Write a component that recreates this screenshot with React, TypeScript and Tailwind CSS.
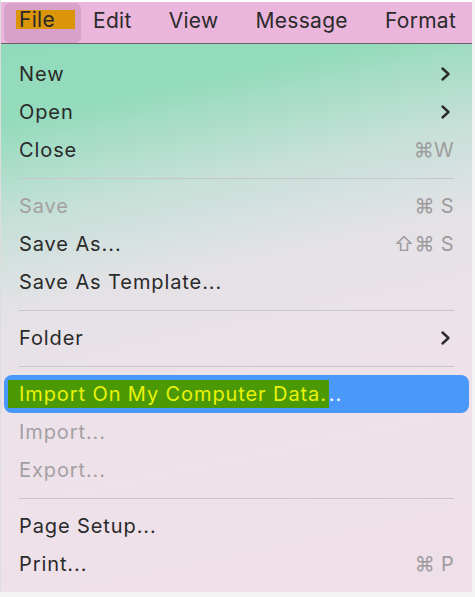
import type { ReactNode } from 'react'

type Item =
  | { kind: 'sep' }
  | {
      kind: 'item'
      label: ReactNode
      shortcut?: ReactNode
      submenu?: boolean
      disabled?: boolean
      active?: boolean
    }

function Chevron() {
  return (
    <svg width="11" height="16" viewBox="0 0 11 16" className="mr-[3px]">
      <path d="M2.5 2.5 L8.5 8 L2.5 13.5" fill="none" stroke="#2b2b2b" strokeWidth="2.4" strokeLinecap="round" strokeLinejoin="round" />
    </svg>
  )
}

const items: Item[] = [
  { kind: 'item', label: 'New', submenu: true },
  { kind: 'item', label: 'Open', submenu: true },
  { kind: 'item', label: 'Close', shortcut: '⌘W' },
  { kind: 'sep' },
  { kind: 'item', label: 'Save', shortcut: '⌘ S', disabled: true },
  { kind: 'item', label: 'Save As...', shortcut: '⇧⌘ S' },
  { kind: 'item', label: 'Save As Template...' },
  { kind: 'sep' },
  { kind: 'item', label: 'Folder', submenu: true },
  { kind: 'sep' },
  {
    kind: 'item',
    active: true,
    label: (
      <>
        <span className="bg-[#4b9a05] text-[#e9f20a] -ml-[11px] pl-[11px] pr-[2px] py-[2px]">Import On My Computer Data.</span>
        <span className="text-white">..</span>
      </>
    ),
  },
  { kind: 'item', label: 'Import...', disabled: true },
  { kind: 'item', label: 'Export...', disabled: true },
  { kind: 'sep' },
  { kind: 'item', label: 'Page Setup...' },
  { kind: 'item', label: 'Print...', shortcut: '⌘ P' },
]

export default function App() {
  const menus = ['Edit', 'View', 'Message', 'Format']
  return (
    <div className="w-[475px] h-[597px] bg-[#f4f4f4] font-['Inter','Liberation_Sans',sans-serif] overflow-hidden">
      <div className="w-[472px] h-[592px] flex flex-col bg-[linear-gradient(168deg,#8edbbb_0%,#95dbbd_18%,#c6e0d8_32%,#e4e2e6_45%,#eee2ea_65%,#efdfe9_100%)] border-l border-[#ddd]">
        <div className="h-[44px] shrink-0 flex items-center pl-[3px] bg-[#ebb6dc] border-b border-[#6f5d69] border-t-2 border-t-white">
          <div className="h-[40px] w-[77px] rounded-md bg-[#d8a1c9] flex items-center pl-[12px]">
            <span className="bg-[#da950a] text-[21px] text-[#2a2a2a] tracking-[0.3px] pl-[3px] pr-[20px] leading-[19px] -mt-[6px]">File</span>
          </div>
          <div className="flex text-[21px] text-[#2a2a2a] tracking-[0.3px] -mt-[4px]">
            {menus.map((m, i) => (
              <span key={m} className={i === 0 ? 'ml-[12px]' : 'ml-[37px]'}>
                {m}
              </span>
            ))}
          </div>
        </div>
        <div className="pt-[11px] flex flex-col">
          {items.map((it, i) =>
            it.kind === 'sep' ? (
              <div key={i} className="h-[18px] flex items-center px-[18px]">
                <div className="h-px w-full bg-[#c9c6c9]" />
              </div>
            ) : (
              <div
                key={i}
                className={
                  'h-[38px] flex items-center justify-between text-[20px] tracking-[0.9px] ' +
                  (it.active ? 'mx-[3px] pl-[15px] pr-[15px] rounded-lg bg-[#4b98fb] text-white' : 'pl-[18px] pr-[18px]') +
                  (it.disabled ? ' text-[#a3a0a3]' : it.active ? '' : ' text-[#2a2a2a]')
                }
              >
                <span>{it.label}</span>
                {it.submenu && <Chevron />}
                {it.shortcut && <span className="text-[#9d9b9d] text-[20px] tracking-[0.3px]">{it.shortcut}</span>}
              </div>
            ),
          )}
        </div>
      </div>
    </div>
  )
}
